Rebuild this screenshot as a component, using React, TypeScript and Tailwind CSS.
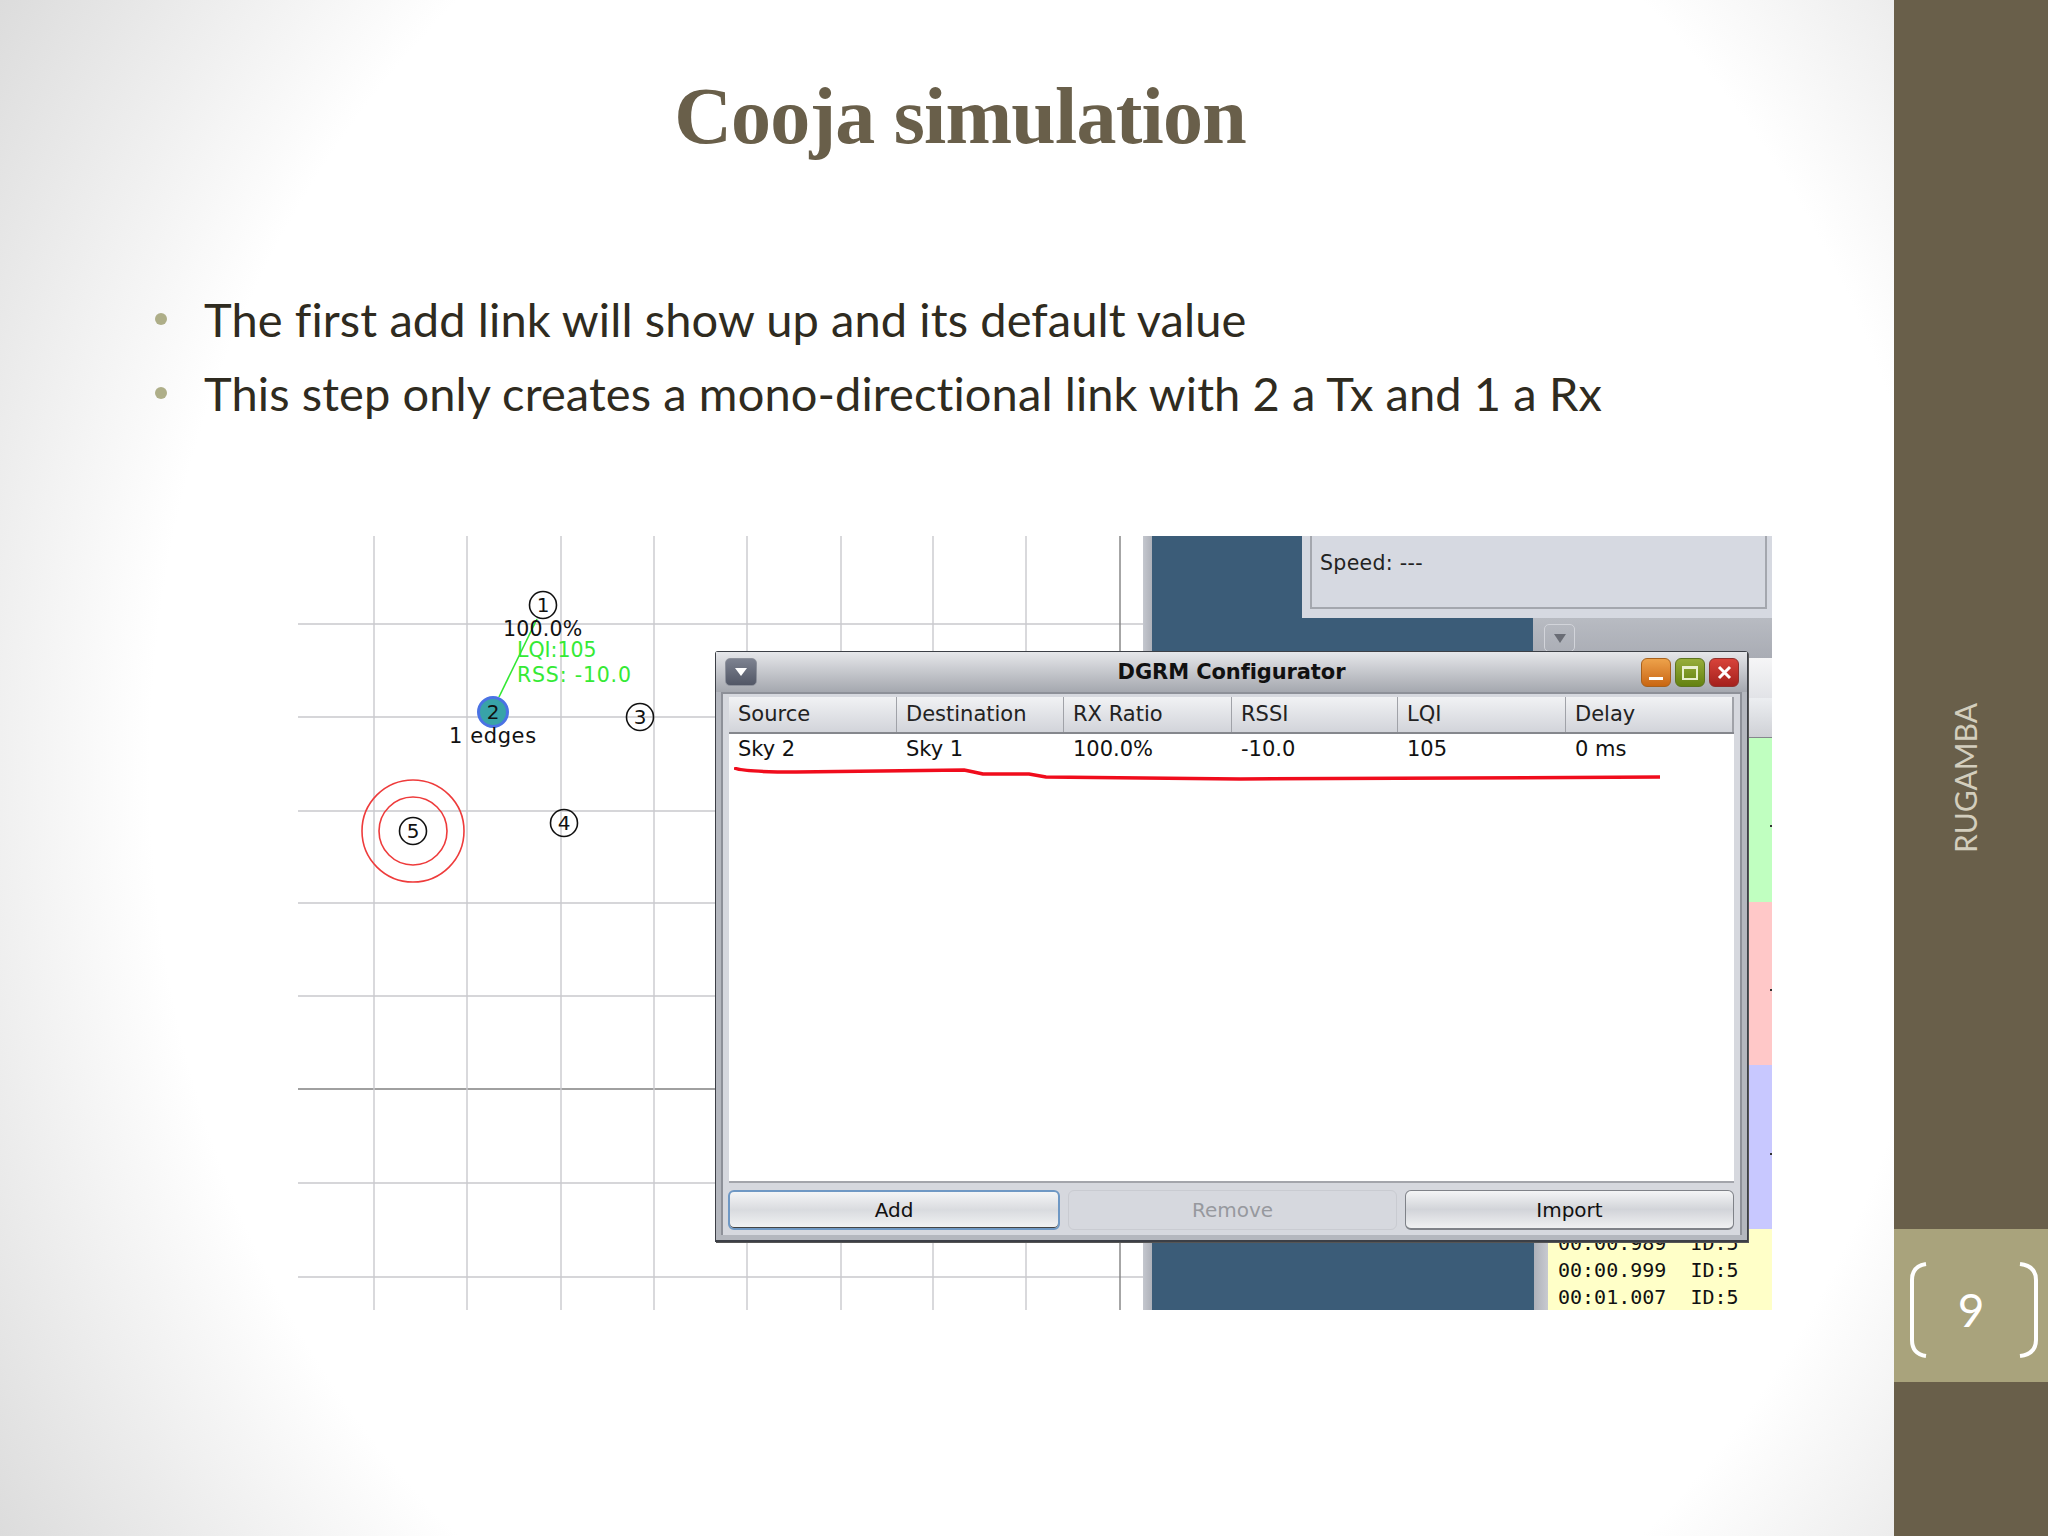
import React from 'react';

const columns = ['Source', 'Destination', 'RX Ratio', 'RSSI', 'LQI', 'Delay'];
const row = ['Sky 2', 'Sky 1', '100.0%', '-10.0', '105', '0 ms'];
const gridX = [76, 169, 263, 356, 449, 543, 635, 728, 822];
const gridY = [88, 181, 275, 367, 460, 553, 647, 741];

const NetworkCanvas = () => (
  <svg className="absolute inset-0 font-['DejaVu_Sans']" width="845" height="774" viewBox="0 0 845 774">
    {gridY.map((y) => (
      <line key={y} x1="0" x2="845" y1={y} y2={y} stroke={y === 553 ? '#808080' : '#c9c9cd'} strokeWidth="1.4" />
    ))}
    {gridX.map((x) => (
      <line key={x} x1={x} x2={x} y1="0" y2="774" stroke={x === 822 ? '#808080' : '#c9c9cd'} strokeWidth="1.4" />
    ))}
    <line x1="239" y1="83" x2="201" y2="161" stroke="#33e833" strokeWidth="1.6" />
    <circle cx="115" cy="295" r="51" fill="none" stroke="#ee3b3b" strokeWidth="1.6" />
    <circle cx="115" cy="295" r="34" fill="none" stroke="#ee3b3b" strokeWidth="1.6" />
    {[
      [245, 69, '1'],
      [342, 181, '3'],
      [266, 287, '4'],
      [115, 295, '5'],
    ].map(([x, y, n]) => (
      <g key={n}>
        <circle cx={x} cy={y} r="13.5" fill="none" stroke="#111" strokeWidth="1.6" />
        <text x={x} y={Number(y) + 7} textAnchor="middle" fontSize="20" fill="#111">{n}</text>
      </g>
    ))}
    <circle cx="195" cy="176" r="14.5" fill="#38a3a8" stroke="#4a72e4" strokeWidth="3" />
    <text x="195" y="183" textAnchor="middle" fontSize="20" fill="#111">2</text>
    <text x="205" y="100" fontSize="20.5" fill="#111" letterSpacing="0.2">100.0%</text>
    <text x="219" y="121" fontSize="20.5" fill="#35ea35">LQI:105</text>
    <text x="219" y="146" fontSize="20.5" fill="#35ea35" letterSpacing="0.8">RSS: -10.0</text>
    <text x="151" y="207" fontSize="21" fill="#111" letterSpacing="0.6">1 edges</text>
  </svg>
);

const Dialog = () => (
  <div className="absolute left-[417px] top-[115px] w-[1033px] h-[591px] flex flex-col rounded-t-[3px] border border-[#3c3f46] border-b-2 bg-[#b4b7be] font-['DejaVu_Sans'] shadow-[1px_1px_0_#555]">
    {/* Title bar */}
    <div className="relative h-[40px] shrink-0 flex items-center justify-center bg-gradient-to-b from-[#e6e7ea] to-[#a5a8af]">
      <div className="absolute left-[9px] top-[6px] w-[32px] h-[28px] rounded-[5px] flex items-center justify-center bg-gradient-to-b from-[#7d8290] to-[#525766] border border-[#8d919b]">
        <svg width="14" height="10" viewBox="0 0 14 10"><path d="M1 1h12L7 9z" fill="#fff" /></svg>
      </div>
      <span className="mt-[2px] text-[21px] font-bold text-[#111] tracking-[-0.1px]">DGRM Configurator</span>
      <div className="absolute right-[8px] top-[6px] flex gap-[4px]">
        <div className="w-[30px] h-[29px] rounded-[6px] flex items-end justify-center pb-[6px] bg-gradient-to-b from-[#eda24a] to-[#c9660f] border border-[#a8611c]">
          <div className="w-[14px] h-[3px] bg-white" />
        </div>
        <div className="w-[30px] h-[29px] rounded-[6px] flex items-center justify-center bg-gradient-to-b from-[#97ad3a] to-[#64820f] border border-[#5d7420]">
          <div className="w-[16px] h-[14px] border-2 border-t-[3px] border-[#e9efcf]" />
        </div>
        <div className="w-[30px] h-[29px] rounded-[6px] flex items-center justify-center bg-gradient-to-b from-[#d8433a] to-[#a5201c] border border-[#90302c]">
          <svg width="15" height="15" viewBox="0 0 15 15"><path d="M2 2l11 11M13 2L2 13" stroke="#fff" strokeWidth="3" /></svg>
        </div>
      </div>
    </div>
    {/* Body */}
    <div className="flex-1 flex flex-col mx-[5px] mb-[5px] px-[6px] pt-[3px] pb-[5px] border-l-2 border-r-2 border-t-2 border-[#8d9098] bg-[#d6d8de]">
      <div className="flex-1 flex flex-col bg-white border-b-2 border-[#a3a5ab]">
        <div className="h-[37px] shrink-0 grid grid-cols-[168px_167px_168px_166px_168px_1fr] bg-gradient-to-b from-[#f1f2f4] to-[#d2d4da] border-b-2 border-[#85878d] text-[21px] text-[#222]">
          {columns.map((c) => (
            <div key={c} className="flex items-center pl-[9px] border-r border-[#a0a2a8] last:border-r-2">{c}</div>
          ))}
        </div>
        <div className="relative h-[31px] grid grid-cols-[168px_167px_168px_166px_168px_1fr] text-[21px] text-[#111]">
          {row.map((c) => (
            <div key={c} className="flex items-center pl-[9px]">{c}</div>
          ))}
        </div>
      </div>
      <div className="h-[40px] shrink-0 mt-[7px] -ml-[1px] flex gap-[8px] text-[20px]">
        <button className="w-[332px] rounded-[6px] border-2 border-[#6f98c4] bg-gradient-to-b from-[#f4f5f6] via-[#d9dbdf] to-[#f2f3f4] text-[#111] shadow-[inset_0_-1px_0_#444]">Add</button>
        <button className="w-[329px] rounded-[6px] border border-[#c9cbd1] bg-[#d6d8de] text-[#97999e]">Remove</button>
        <button className="flex-1 rounded-[6px] border border-[#7f8288] border-b-2 bg-gradient-to-b from-[#f4f5f6] via-[#d2d4d9] to-[#f0f1f2] text-[#111]">Import</button>
      </div>
    </div>
  </div>
);

// Redrawn freehand annotation over the table row
const RedMark = () => (
  <svg className="absolute left-[436px] top-[231px]" width="940" height="20" viewBox="0 0 940 20">
    <path d="M0 0 Q10 4 62 4 L230 2 Q240 4 249 6 L295 6 L312 9 L506 11 L926 9" transform="translate(0 1)" fill="none" stroke="#f00c1c" strokeWidth="3.5" />
  </svg>
);

const BackgroundApp = () => (
  <div className="absolute left-[845px] top-0 w-[629px] h-[774px] flex font-['DejaVu_Sans']">
    <div className="w-[9px] bg-gradient-to-r from-[#c4c7ce] to-[#aeb1b9]" />
    <div className="relative flex-1 bg-[#3b5c78]">
      {/* Top right panel */}
      <div className="absolute right-0 top-0 w-[470px] h-[82px] pl-[8px] pr-[5px] pb-[9px] bg-[#d6d9e1]">
        <div className="h-full pl-[8px] pt-[12px] border-b-2 border-l-2 border-r-2 border-[#a4a7ae] text-[20.5px] tracking-[0.3px] text-[#222]">Speed: ---</div>
      </div>
      <div className="absolute right-0 top-[82px] w-[239px] h-[40px] pl-[11px] pt-[6px] bg-gradient-to-b from-[#b8bbc2] to-[#a9acb4]">
        <div className="w-[31px] h-[28px] rounded-[5px] border border-[#d2d4da] flex items-center justify-center">
          <svg width="12" height="9" viewBox="0 0 12 9"><path d="M0 0h12L6 9z" fill="#6a6d75" /></svg>
        </div>
      </div>
      {/* Timeline and log */}
      <div className="absolute right-0 top-[122px] bottom-0 w-[238px] flex">
        <div className="w-[14px] bg-gradient-to-r from-[#aeb1b9] to-[#c8cad0]" />
        <div className="flex-1 flex flex-col">
          <div className="h-[80px] flex flex-col items-end bg-[#eceef1]">
            <div className="h-[40px] w-full bg-gradient-to-b from-[#f6f6f7] to-[#e2e3e7]" />
            <div className="h-[40px] w-full bg-gradient-to-b from-[#eceef1] to-[#cfd1d6] border-b border-[#85878d]" />
          </div>
          <div className="h-[164px] flex items-end justify-end bg-[#c0ffc0]"><span className="mb-[75px] w-[2px] h-[2px] bg-[#333]" /></div>
          <div className="h-[163px] flex items-end justify-end bg-[#ffc8c8]"><span className="mb-[74px] w-[2px] h-[2px] bg-[#333]" /></div>
          <div className="h-[164px] flex items-end justify-end bg-[#c8c8ff]"><span className="mb-[74px] w-[2px] h-[2px] bg-[#333]" /></div>
          <div className="flex-1 overflow-hidden bg-[#ffffc8] pl-[10px] font-['DejaVu_Sans_Mono'] text-[20px] leading-[27px] text-[#111] whitespace-pre">
            <div className="mt-[1px]">00:00.989  ID:5</div>
            <div>00:00.999  ID:5</div>
            <div>00:01.007  ID:5</div>
          </div>
        </div>
      </div>
    </div>
  </div>
);

export default function App() {
  return (
    <div className="w-[2048px] h-[1536px] flex overflow-hidden">
      <main className="w-[1894px] shrink-0 flex flex-col bg-[radial-gradient(ellipse_1250px_1414px_at_1050px_768px,#ffffff_72%,#dcdcdc_100%)]">
        <h1 className="mt-[71px] h-[90px] pl-[26px] text-center font-['Liberation_Serif'] font-bold text-[80px] leading-[90px] tracking-[-0.8px] text-[#695f4a]">Cooja simulation</h1>
        <ul className="mt-[121px] ml-[155px] font-['Lato'] text-[47px] leading-[74px] tracking-[0.1px] text-[#2f2b20]">
          <li className="flex items-center gap-[37px]">
            <span className="w-[12px] h-[12px] rounded-full bg-[#aeae88]" />
            The first add link will show up and its default value
          </li>
          <li className="flex items-center gap-[37px]">
            <span className="w-[12px] h-[12px] rounded-full bg-[#aeae88]" />
            This step only creates a mono-directional link with 2 a Tx and 1 a Rx
          </li>
        </ul>
        <div className="relative mt-[106px] ml-[298px] w-[1474px] h-[774px] overflow-hidden bg-white">
          <NetworkCanvas />
          <BackgroundApp />
          <Dialog />
          <RedMark />
        </div>
      </main>
      <aside className="flex-1 flex flex-col bg-[#695f4a]">
        <div className="h-[704px] shrink-0" />
        <div className="h-[148px] flex items-center justify-center pr-[12px]">
          <span className="[writing-mode:vertical-rl] rotate-180 font-['Lato'] text-[30px] text-[#d3cebd]">RUGAMBA</span>
        </div>
        <div className="h-[377px] shrink-0" />
        <div className="relative h-[153px] flex items-center justify-center pt-[8px] bg-[#a9a37c] font-['Lato'] text-[46px] text-white">
          <svg className="absolute left-[14px] top-[33px]" width="132" height="96" viewBox="0 0 132 96" fill="none" stroke="white" strokeWidth="4">
            <path d="M18 2 Q4 4 4 18 V78 Q4 92 18 94" />
            <path d="M112 2 Q128 4 128 18 V78 Q128 92 112 94" />
          </svg>
          9
        </div>
        <div className="flex-1" />
      </aside>
    </div>
  );
}
